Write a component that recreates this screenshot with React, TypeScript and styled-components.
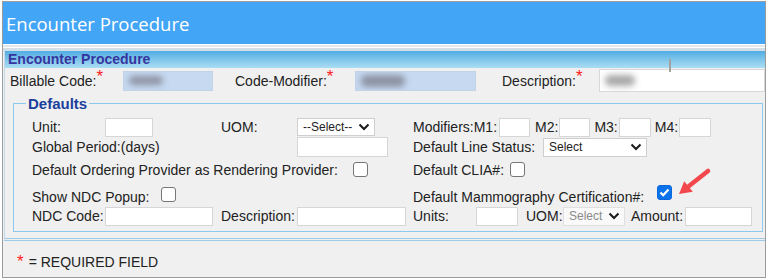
import React from 'react';
import styled, { createGlobalStyle } from 'styled-components';

const Global = createGlobalStyle`
  html, body { margin: 0; padding: 0; background: #fff; }
  body { font-family: "Liberation Sans", Arial, sans-serif; }
  * { box-sizing: border-box; }
`;

const Frame = styled.div`
  position: relative;
  margin: 1px 0 0 2px;
  width: 764px;
  height: 277px;
  border: 1px solid #9c9c9c;
  background: #f0f0f0;
  overflow: hidden;
  display: flex;
  flex-direction: column;
`;

const Header = styled.div`
  flex: none;
  height: 42px;
  background: #42a5f5;
  color: #fff;
  font-family: "Open Sans", "Liberation Sans", sans-serif;
  font-size: 18.5px;
  display: flex;
  align-items: center;
  padding: 1px 0 0 3px;
`;

const Stripe = styled.div`
  flex: none;
  height: 7px;
  background: linear-gradient(
    #ffffff 0 1px,
    #e3e8ec 1px 3px,
    #ffffff 3px 4px,
    #d2dfe8 4px 7px
  );
`;

const Section = styled.div`
  flex: none;
  margin-left: 1px;
  border-left: 1px solid #c3dbea;
  border-bottom: 3px double #9ccbe9;
  display: flex;
  flex-direction: column;
`;

const SectionTitle = styled.div`
  height: 17px;
  padding-left: 3px;
  background: linear-gradient(#52ade2, #abddf3);
  color: #35359f;
  font-weight: bold;
  font-size: 14px;
  line-height: 17px;
`;

const TopRow = styled.div`
  height: 25px;
  padding-left: 5px;
  display: flex;
  align-items: center;
`;

const Label = styled.span<{ $w?: number; $ml?: number }>`
  flex: none;
  display: inline-block;
  width: ${(p) => (p.$w ? `${p.$w}px` : 'auto')};
  margin-left: ${(p) => p.$ml ?? 0}px;
  font-size: 14px;
  line-height: 16px;
  color: #222;
  white-space: nowrap;
`;

const Req = styled.span`
  color: #ff1a1a;
  font-size: 17px;
  line-height: 0;
  vertical-align: 4px;
`;

const MaskedBox = styled.div<{ $w?: number; $h: number; $ml?: number; $light?: boolean }>`
  flex: ${(p) => (p.$w ? 'none' : '1')};
  width: ${(p) => (p.$w ? `${p.$w}px` : 'auto')};
  height: ${(p) => p.$h}px;
  margin-left: ${(p) => p.$ml ?? 0}px;
  background: ${(p) => (p.$light ? '#ffffff' : '#c6d9f1')};
  border: 1px solid ${(p) => (p.$light ? '#d8d8d8' : '#c3d3e6')};
  display: flex;
  align-items: center;
  padding-left: 5px;
  overflow: hidden;
`;

const Smudge = styled.div<{ $w: number; $h: number; $c: string }>`
  width: ${(p) => p.$w}px;
  height: ${(p) => p.$h}px;
  border-radius: 5px;
  background: ${(p) => p.$c};
  filter: blur(3px);
`;

const Fieldset = styled.fieldset`
  margin: 2px 2px 6px 8px;
  padding: 5px 0 4px 12px;
  border: 1px solid #8ec9ec;
  min-width: 0;
`;

const Legend = styled.legend`
  padding: 0 2px;
  font-size: 15px;
  line-height: 17px;
  font-weight: bold;
  color: #1b3f9c;
`;

const Rows = styled.div`
  padding-left: 6px;
  display: flex;
  flex-direction: column;
`;

const Row = styled.div<{ $h: number; $pt?: number }>`
  height: ${(p) => p.$h}px;
  padding-top: ${(p) => p.$pt ?? 0}px;
  display: flex;
  align-items: center;
`;

const Half = styled.div<{ $w?: number }>`
  flex: ${(p) => (p.$w ? 'none' : '1')};
  width: ${(p) => (p.$w ? `${p.$w}px` : 'auto')};
  height: 100%;
  display: flex;
  align-items: center;
`;

const TextBox = styled.div<{ $w: number; $h?: number; $ml?: number }>`
  flex: none;
  width: ${(p) => p.$w}px;
  height: ${(p) => p.$h ?? 19}px;
  margin-left: ${(p) => p.$ml ?? 0}px;
  background: #fff;
  border: 1px solid #d6d6d6;
`;

const SelectBox = styled.div<{ $w: number; $h?: number; $ml?: number; $muted?: boolean; $fs?: number }>`
  flex: none;
  width: ${(p) => p.$w}px;
  height: ${(p) => p.$h ?? 18}px;
  margin-left: ${(p) => p.$ml ?? 0}px;
  background: ${(p) => (p.$muted ? '#f9f9f9' : '#ffffff')};
  border: 1px solid ${(p) => (p.$muted ? '#e0e0e0' : '#cfcfcf')};
  display: flex;
  align-items: center;
  justify-content: space-between;
  padding: 0 4px 0 5px;
  font-size: ${(p) => p.$fs ?? 12}px;
  color: ${(p) => (p.$muted ? '#8a8a8a' : '#222')};
`;

const Check = styled.span<{ $checked?: boolean; $ml?: number; $mt?: number }>`
  flex: none;
  align-self: flex-start;
  width: 15px;
  height: 15px;
  margin-left: ${(p) => p.$ml ?? 0}px;
  margin-top: ${(p) => p.$mt ?? 0}px;
  border-radius: 3px;
  border: 1px solid ${(p) => (p.$checked ? '#0b68dc' : '#767676')};
  background: ${(p) => (p.$checked ? '#0b73ea' : '#ffffff')};
  display: flex;
  align-items: center;
  justify-content: center;
`;

const Footer = styled.div`
  flex: none;
  height: 36px;
  padding: 6px 0 0 14px;
  display: flex;
  align-items: center;
  font-size: 14px;
  color: #222;
`;

const FooterStar = styled.span`
  color: #ff1a1a;
  font-size: 17px;
  line-height: 0;
  vertical-align: 4px;
  margin-right: 5px;
`;

const Tick = styled.div`
  position: absolute;
  left: 666px;
  top: 57px;
  width: 2px;
  height: 13px;
  background: #a3a3a3;
`;

const Arrow = styled.svg`
  position: absolute;
  left: 669px;
  top: 162px;
`;

const Chevron = () => (
  <svg width="12" height="8" viewBox="0 0 12 8">
    <polyline points="1.5,1.5 6,6 10.5,1.5" fill="none" stroke="#1a1a1a" strokeWidth="2" />
  </svg>
);

const Tickmark = () => (
  <svg width="11" height="9" viewBox="0 0 11 9">
    <polyline points="1.5,4.5 4.2,7.2 9.5,1.5" fill="none" stroke="#fff" strokeWidth="2.2" />
  </svg>
);

export default function App() {
  return (
    <>
      <Global />
      <Frame>
        <Header>Encounter Procedure</Header>
        <Stripe />
        <Section>
          <SectionTitle>Encounter Procedure</SectionTitle>
          <TopRow>
            <Label $w={113}>
              Billable Code:<Req>*</Req>
            </Label>
            <MaskedBox $w={90} $h={20}>
              <Smudge $w={34} $h={9} $c="#8d93a3" />
            </MaskedBox>
            <Label $w={120} $ml={22}>
              Code-Modifier:<Req>*</Req>
            </Label>
            <MaskedBox $w={121} $h={20}>
              <Smudge $w={44} $h={12} $c="#8d93a3" />
            </MaskedBox>
            <Label $w={97} $ml={26}>
              Description:<Req>*</Req>
            </Label>
            <MaskedBox $h={23} $light>
              <Smudge $w={30} $h={11} $c="#a8a8a8" />
            </MaskedBox>
          </TopRow>
          <Fieldset>
            <Legend>Defaults</Legend>
            <Rows>
              <Row $h={20}>
                <Half $w={381}>
                  <Label $w={73}>Unit:</Label>
                  <TextBox $w={48} />
                  <Label $w={76} $ml={68}>UOM:</Label>
                  <SelectBox $w={78} $h={18}>
                    --Select--
                    <Chevron />
                  </SelectBox>
                </Half>
                <Half>
                  <Label>Modifiers:M1:</Label>
                  <TextBox $w={31} $ml={2} />
                  <Label $ml={5}>M2:</Label>
                  <TextBox $w={31} $ml={1} />
                  <Label $ml={4}>M3:</Label>
                  <TextBox $w={32} $ml={1} />
                  <Label $ml={4}>M4:</Label>
                  <TextBox $w={32} $ml={1} />
                </Half>
              </Row>
              <Row $h={20}>
                <Half $w={381}>
                  <Label $w={265}>Global Period:(days)</Label>
                  <TextBox $w={91} $h={20} />
                </Half>
                <Half>
                  <Label $w={130}>Default Line Status:</Label>
                  <SelectBox $w={104} $h={19} $fs={12}>
                    Select
                    <Chevron />
                  </SelectBox>
                </Half>
              </Row>
              <Row $h={25}>
                <Half $w={381}>
                  <Label>Default Ordering Provider as Rendering Provider:</Label>
                  <Check $ml={15} $mt={5} />
                </Half>
                <Half>
                  <Label>Default CLIA#:</Label>
                  <Check $ml={6} $mt={5} />
                </Half>
              </Row>
              <Row $h={23} $pt={6}>
                <Half $w={381}>
                  <Label>Show NDC Popup:</Label>
                  <Check $ml={11} $mt={-1} />
                </Half>
                <Half>
                  <Label>Default Mammography Certification#:</Label>
                  <Check $checked $ml={13} $mt={-3}>
                    <Tickmark />
                  </Check>
                </Half>
              </Row>
              <Row $h={22}>
                <Half $w={381}>
                  <Label $w={73}>NDC Code:</Label>
                  <TextBox $w={108} />
                  <Label $w={76} $ml={8}>Description:</Label>
                  <TextBox $w={109} />
                </Half>
                <Half>
                  <Label $w={63}>Units:</Label>
                  <TextBox $w={42} />
                  <Label $w={37} $ml={8}>UOM:</Label>
                  <SelectBox $w={62} $h={19} $muted $fs={12}>
                    Select
                    <Chevron />
                  </SelectBox>
                  <Label $w={54} $ml={6}>Amount:</Label>
                  <TextBox $w={67} />
                </Half>
              </Row>
            </Rows>
          </Fieldset>
        </Section>
        <Footer>
          <FooterStar>*</FooterStar>= REQUIRED FIELD
        </Footer>
        <Tick />
        <Arrow width="44" height="36" viewBox="0 0 44 36">
          <line x1="36" y1="7" x2="17" y2="22" stroke="#f2474c" strokeWidth="4.5" strokeLinecap="round" />
          <polygon points="7,30 12.2,17.2 20.8,27.8" fill="#f2474c" />
        </Arrow>
      </Frame>
    </>
  );
}
